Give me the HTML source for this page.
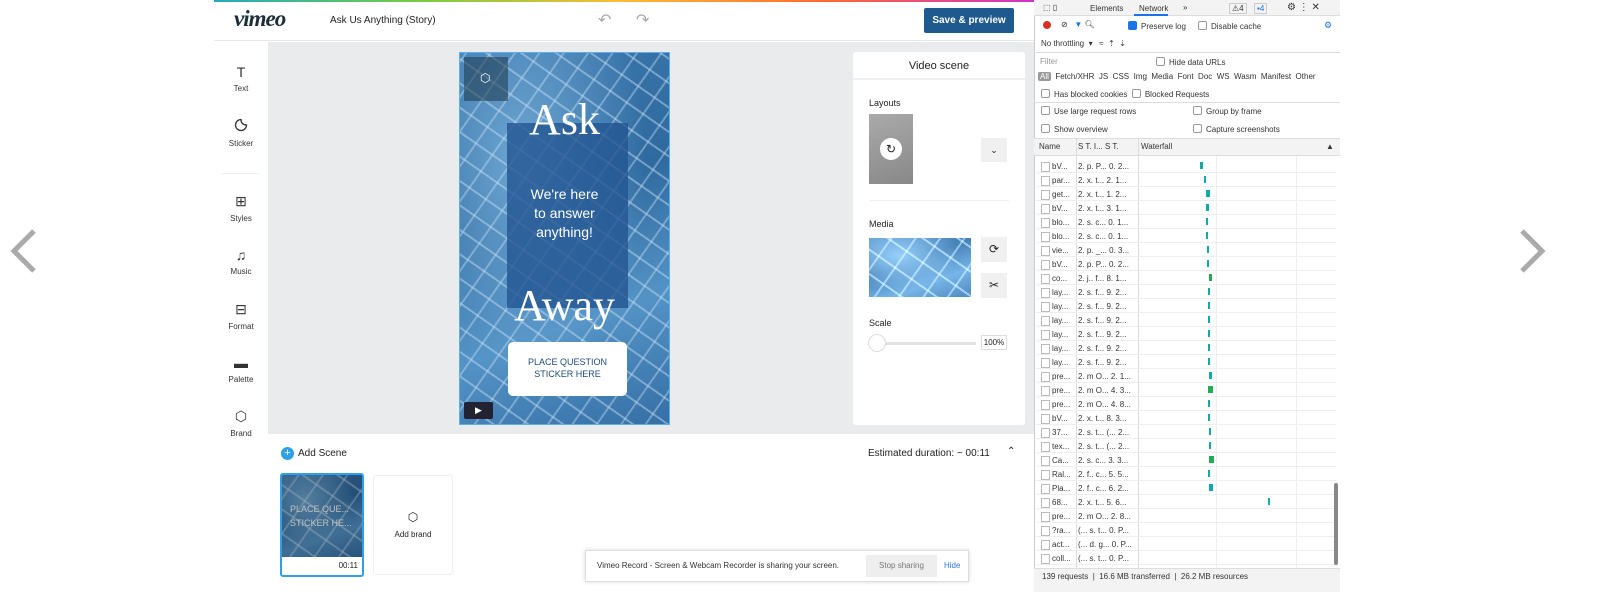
<!DOCTYPE html>
<html><head><meta charset="utf-8"><style>
*{box-sizing:border-box;margin:0;padding:0}
body{width:1600px;height:592px;background:#fff;font-family:"Liberation Sans",sans-serif;position:relative;overflow:hidden;color:#222}
.a{position:absolute}
.side div{position:absolute;left:214px;width:54px;text-align:center;font-size:8px;color:#333}
.side span{display:block;font-size:14px;margin-bottom:4px}
.dt{font-size:8px;color:#333}
.cb{display:inline-block;width:9px;height:9px;border:1px solid #999;border-radius:2px;vertical-align:-1px;margin-right:4px;background:#fff}
.row{position:absolute;left:1036px;width:300px;height:14px;font-size:8px;color:#333;border-bottom:1px solid #eee}
.row span{position:absolute;top:3px}
.row:before{content:"";position:absolute;left:5px;top:3px;width:7px;height:8px;border:1px solid #bbb;background:#fff}
.pool{background:
repeating-linear-gradient(35deg,rgba(255,255,255,0) 0 18px,rgba(200,225,245,.45) 18px 20px),
repeating-linear-gradient(-55deg,rgba(255,255,255,0) 0 18px,rgba(200,225,245,.4) 18px 20px),
radial-gradient(ellipse at 30% 30%,#6fa8d4,transparent 60%),
linear-gradient(160deg,#3d78ad,#2f6a9f 40%,#5493c6 70%,#356fa5)}
</style></head><body>
<div class="a" style="left:214px;top:0;width:820px;height:2px;background:linear-gradient(90deg,#2ab,#7c4,#fb3,#f63,#c3c)"></div>
<div class="a" style="left:214px;top:2px;width:820px;height:39px;background:#fff;border-bottom:1px solid #e6e6e6"></div>
<div class="a" style="left:234px;top:6px;font:bold italic 23px 'Liberation Serif',serif;color:#1a2e3b;letter-spacing:-1px">vimeo</div>
<div class="a" style="left:330px;top:15px;font-size:10px;color:#222">Ask Us Anything (Story)</div>
<div class="a" style="left:598px;top:10px;font-size:16px;color:#aaa">↶</div>
<div class="a" style="left:636px;top:10px;font-size:16px;color:#aaa">↷</div>
<div class="a" style="left:924px;top:8px;width:90px;height:25px;background:#1e5a8e;border-radius:2px;color:#fff;font-size:10px;font-weight:bold;text-align:center;line-height:25px">Save &amp; preview</div>
<div class="a" style="left:214px;top:42px;width:54px;height:550px;background:#fff"></div>
<div class="a" style="left:221px;top:173px;width:40px;height:1px;background:#eee"></div>
<div class="side">
<div style="top:64px"><span>T</span>Text</div>
<div style="top:118px"><span><svg width="14" height="14" viewBox="0 0 14 14"><path d="M7 1.5a5.5 5.5 0 1 0 5.5 5.5C9 7 7 5 7 1.5z" fill="none" stroke="#333" stroke-width="1.3"/></svg></span>Sticker</div>
<div style="top:193px"><span>⊞</span>Styles</div>
<div style="top:247px"><span>♫</span>Music</div>
<div style="top:301px"><span>⊟</span>Format</div>
<div style="top:355px"><span>▬</span>Palette</div>
<div style="top:408px"><span>⬡</span>Brand</div>
</div>
<div class="a" style="left:268px;top:42px;width:766px;height:392px;background:#e9ebec"></div>
<div class="a pool" style="left:459px;top:52px;width:211px;height:373px;border:1px solid #5ab0ef"></div>
<div class="a" style="left:464px;top:57px;width:44px;height:44px;background:rgba(30,55,75,.55)"></div>
<div class="a" style="left:480px;top:71px;color:#fff;font-size:12px">⬡</div>
<div class="a" style="left:507px;top:123px;width:121px;height:185px;background:rgba(35,85,145,.8)"></div>
<div class="a" style="left:459px;top:94px;width:211px;text-align:center;font:44px 'Liberation Serif',serif;color:#fff">Ask</div>
<div class="a" style="left:459px;top:185px;width:211px;text-align:center;font-size:14px;line-height:19px;color:#fff">We're here<br>to answer<br>anything!</div>
<div class="a" style="left:459px;top:280px;width:211px;text-align:center;font:44px 'Liberation Serif',serif;color:#fff">Away</div>
<div class="a" style="left:508px;top:342px;width:119px;height:54px;background:#fff;border-radius:5px;text-align:center;font-size:9px;line-height:12px;color:#1e4b7a;padding-top:14px">PLACE QUESTION<br>STICKER HERE</div>
<div class="a" style="left:464px;top:402px;width:29px;height:17px;background:#223;border-radius:2px;color:#fff;font-size:9px;text-align:center;line-height:17px">▶</div>
<div class="a" style="left:853px;top:52px;width:172px;height:373px;background:#fff;border-radius:3px"></div>
<div class="a" style="left:853px;top:52px;width:172px;height:28px;border-bottom:2px solid #f0f0f0;text-align:center;line-height:28px;font-size:11px">Video scene</div>
<div class="a" style="left:869px;top:98px;font-size:9px">Layouts</div>
<div class="a" style="left:869px;top:114px;width:44px;height:70px;background:linear-gradient(160deg,#aaa,#888)"></div>
<div class="a" style="left:880px;top:138px;width:22px;height:22px;border-radius:50%;background:#fff;text-align:center;line-height:22px;font-size:12px">↻</div>
<div class="a" style="left:981px;top:138px;width:26px;height:24px;background:#f0f0f0;text-align:center;line-height:24px;font-size:9px">⌄</div>
<div class="a" style="left:869px;top:200px;width:140px;height:1px;background:#eee"></div>
<div class="a" style="left:869px;top:219px;font-size:9px">Media</div>
<div class="a pool" style="left:869px;top:238px;width:102px;height:59px;filter:saturate(.8) brightness(1.25)"></div>
<div class="a" style="left:981px;top:237px;width:26px;height:25px;background:#f0f0f0;text-align:center;line-height:25px;font-size:12px">⟳</div>
<div class="a" style="left:981px;top:273px;width:26px;height:25px;background:#f0f0f0;text-align:center;line-height:25px;font-size:12px">✂</div>
<div class="a" style="left:869px;top:318px;font-size:9px">Scale</div>
<div class="a" style="left:876px;top:342px;width:100px;height:3px;background:#e3e3e3"></div>
<div class="a" style="left:868px;top:334px;width:18px;height:18px;border-radius:50%;background:#fff;border:1px solid #ddd"></div>
<div class="a" style="left:981px;top:335px;width:26px;height:15px;border:1px solid #ddd;font-size:8px;text-align:center;line-height:13px">100%</div>
<div class="a" style="left:281px;top:447px;width:13px;height:13px;border-radius:50%;background:#2ea0ea;color:#fff;font-size:11px;text-align:center;line-height:13px">+</div>
<div class="a" style="left:298px;top:448px;font-size:10px">Add Scene</div>
<div class="a" style="left:868px;top:448px;font-size:10px">Estimated duration: ~ 00:11</div>
<div class="a" style="left:1007px;top:446px;font-size:10px">⌃</div>
<div class="a" style="left:280px;top:473px;width:84px;height:104px;border:2px solid #2ea0ea;border-radius:3px;background:#fff;overflow:hidden">
<div class="pool" style="height:82px;filter:brightness(.75);color:#fff;font-size:9px;line-height:14px;padding:27px 0 0 8px">PLACE QUE...<br>STICKER HE...</div>
<div style="text-align:right;padding:4px 4px 0 0;font-size:8px">00:11</div></div>
<div class="a" style="left:373px;top:475px;width:80px;height:100px;border:1px solid #eee;border-radius:3px;text-align:center;font-size:8px;padding-top:34px"><div style="font-size:12px;margin-bottom:6px">⬡</div>Add brand</div>
<div class="a" style="left:585px;top:550px;width:384px;height:32px;background:#fff;border:1px solid #ddd;box-shadow:0 0 4px rgba(0,0,0,.15)"></div>
<div class="a" style="left:597px;top:561px;font-size:8px;color:#333">Vimeo Record - Screen &amp; Webcam Recorder is sharing your screen.</div>
<div class="a" style="left:866px;top:555px;width:71px;height:22px;background:#eee;font-size:8px;color:#777;text-align:center;line-height:22px">Stop sharing</div>
<div class="a" style="left:944px;top:561px;font-size:8px;color:#2a7de1">Hide</div>
<svg class="a" style="left:8px;top:228px" width="30" height="46"><path d="M26 3 L6 23 L26 43" stroke="#aaa" stroke-width="5" fill="none"/></svg>
<svg class="a" style="left:1518px;top:228px" width="30" height="46"><path d="M4 3 L24 23 L4 43" stroke="#aaa" stroke-width="5" fill="none"/></svg>
<div class="a" style="left:1034px;top:0;width:306px;height:592px;background:#fff;border-left:1px solid #ccc"></div>
<div class="a" style="left:1034px;top:0;width:306px;height:16px;background:#f3f3f3;border-bottom:1px solid #ddd"></div>
<div class="a dt" style="left:1043px;top:3px">⬚ ▯</div>
<div class="a dt" style="left:1090px;top:4px">Elements</div>
<div class="a dt" style="left:1139px;top:4px">Network</div>
<div class="a" style="left:1134px;top:14px;width:34px;height:2px;background:#1a73e8"></div>
<div class="a dt" style="left:1183px;top:3px">»</div>
<div class="a dt" style="left:1229px;top:3px;border:1px solid #ccc;padding:0 2px">⚠4</div>
<div class="a dt" style="left:1254px;top:3px;border:1px solid #ccc;padding:0 2px;color:#1a73e8">▪4</div>
<div class="a dt" style="left:1287px;top:2px;font-size:10px">⚙ ⋮ ✕</div>
<div class="a" style="left:1043px;top:21px;width:8px;height:8px;border-radius:50%;background:#d93025"></div>
<div class="a dt" style="left:1061px;top:20px">⊘ &nbsp; <span style="color:#1a73e8">▼</span> 🔍︎</div>
<div class="a dt" style="left:1128px;top:21px"><span class="cb" style="background:#1a73e8;border-color:#1a73e8"></span>Preserve log</div>
<div class="a dt" style="left:1198px;top:21px"><span class="cb"></span>Disable cache</div>
<div class="a" style="left:1324px;top:20px;font-size:9px;color:#1a73e8">⚙</div>
<div class="a dt" style="left:1041px;top:39px">No throttling &nbsp;▾ &nbsp; ≈ &nbsp;⇡ &nbsp;⇣</div>
<div class="a" style="left:1034px;top:52px;width:306px;height:1px;background:#ddd"></div>
<div class="a dt" style="left:1040px;top:57px;width:108px;height:11px;color:#999">Filter</div>
<div class="a dt" style="left:1156px;top:57px"><span class="cb"></span>Hide data URLs</div>
<div class="a dt" style="left:1038px;top:72px"><span style="background:#999;color:#fff;padding:0 2px;border-radius:2px">All</span> &nbsp;Fetch/XHR &nbsp;JS &nbsp;CSS &nbsp;Img &nbsp;Media &nbsp;Font &nbsp;Doc &nbsp;WS &nbsp;Wasm &nbsp;Manifest &nbsp;Other</div>
<div class="a dt" style="left:1041px;top:89px"><span class="cb"></span>Has blocked cookies &nbsp;<span class="cb"></span>Blocked Requests</div>
<div class="a" style="left:1034px;top:102px;width:306px;height:1px;background:#ddd"></div>
<div class="a dt" style="left:1041px;top:106px"><span class="cb"></span>Use large request rows</div>
<div class="a dt" style="left:1193px;top:106px"><span class="cb"></span>Group by frame</div>
<div class="a dt" style="left:1041px;top:124px"><span class="cb"></span>Show overview</div>
<div class="a dt" style="left:1193px;top:124px"><span class="cb"></span>Capture screenshots</div>
<div class="a" style="left:1034px;top:138px;width:306px;height:18px;background:#f3f3f3;border-top:1px solid #ddd;border-bottom:1px solid #ddd"></div>
<div class="a dt" style="left:1039px;top:142px">Name</div>
<div class="a dt" style="left:1078px;top:142px">S T. I... S T.</div>
<div class="a dt" style="left:1141px;top:142px">Waterfall</div>
<div class="a dt" style="left:1326px;top:142px">▲</div>
<div class="a" style="left:1076px;top:138px;width:1px;height:430px;background:#ddd"></div>
<div class="a" style="left:1138px;top:138px;width:1px;height:430px;background:#ddd"></div>
<div class="a" style="left:1216px;top:156px;width:1px;height:412px;background:#eee"></div>
<div class="a" style="left:1296px;top:156px;width:1px;height:412px;background:#eee"></div>
<div class="row" style="top:159px"><span style="left:16px">bV...</span><span style="left:42px">2. p. P... 0. 2...</span><span style="left:164px;width:3px;height:7px;background:#1aa"></span></div>
<div class="row" style="top:173px"><span style="left:16px">par...</span><span style="left:42px">2. x. t... 2. 1...</span><span style="left:168px;width:2px;height:7px;background:#1aa"></span></div>
<div class="row" style="top:187px"><span style="left:16px">get...</span><span style="left:42px">2. x. t... 1. 2...</span><span style="left:170px;width:4px;height:7px;background:#1aa"></span></div>
<div class="row" style="top:201px"><span style="left:16px">bV...</span><span style="left:42px">2. x. t... 3. 1...</span><span style="left:170px;width:3px;height:7px;background:#1aa"></span></div>
<div class="row" style="top:215px"><span style="left:16px">blo...</span><span style="left:42px">2. s. c... 0. 1...</span><span style="left:170px;width:2px;height:7px;background:#1aa"></span></div>
<div class="row" style="top:229px"><span style="left:16px">blo...</span><span style="left:42px">2. s. c... 0. 1...</span><span style="left:170px;width:2px;height:7px;background:#1aa"></span></div>
<div class="row" style="top:243px"><span style="left:16px">vie...</span><span style="left:42px">2. p. _... 0. 3...</span><span style="left:171px;width:2px;height:7px;background:#1aa"></span></div>
<div class="row" style="top:257px"><span style="left:16px">bV...</span><span style="left:42px">2. p. P... 0. 2...</span><span style="left:171px;width:2px;height:7px;background:#1aa"></span></div>
<div class="row" style="top:271px"><span style="left:16px">co...</span><span style="left:42px">2. j.. f... 8. 1...</span><span style="left:173px;width:3px;height:7px;background:#2a5"></span></div>
<div class="row" style="top:285px"><span style="left:16px">lay...</span><span style="left:42px">2. s. f... 9. 2...</span><span style="left:172px;width:2px;height:7px;background:#1aa"></span></div>
<div class="row" style="top:299px"><span style="left:16px">lay...</span><span style="left:42px">2. s. f... 9. 2...</span><span style="left:172px;width:2px;height:7px;background:#1aa"></span></div>
<div class="row" style="top:313px"><span style="left:16px">lay...</span><span style="left:42px">2. s. f... 9. 2...</span><span style="left:172px;width:2px;height:7px;background:#1aa"></span></div>
<div class="row" style="top:327px"><span style="left:16px">lay...</span><span style="left:42px">2. s. f... 9. 2...</span><span style="left:172px;width:2px;height:7px;background:#1aa"></span></div>
<div class="row" style="top:341px"><span style="left:16px">lay...</span><span style="left:42px">2. s. f... 9. 2...</span><span style="left:172px;width:2px;height:7px;background:#1aa"></span></div>
<div class="row" style="top:355px"><span style="left:16px">lay...</span><span style="left:42px">2. s. f... 9. 2...</span><span style="left:172px;width:2px;height:7px;background:#1aa"></span></div>
<div class="row" style="top:369px"><span style="left:16px">pre...</span><span style="left:42px">2. m O... 2. 1...</span><span style="left:173px;width:3px;height:7px;background:#1aa"></span></div>
<div class="row" style="top:383px"><span style="left:16px">pre...</span><span style="left:42px">2. m O... 4. 3...</span><span style="left:172px;width:5px;height:7px;background:#2a5"></span></div>
<div class="row" style="top:397px"><span style="left:16px">pre...</span><span style="left:42px">2. m O... 4. 8...</span><span style="left:172px;width:2px;height:7px;background:#1aa"></span></div>
<div class="row" style="top:411px"><span style="left:16px">bV...</span><span style="left:42px">2. x. t... 8. 3...</span><span style="left:172px;width:2px;height:7px;background:#1aa"></span></div>
<div class="row" style="top:425px"><span style="left:16px">37...</span><span style="left:42px">2. s. t... (... 2...</span><span style="left:173px;width:2px;height:7px;background:#1aa"></span></div>
<div class="row" style="top:439px"><span style="left:16px">tex...</span><span style="left:42px">2. s. t... (... 2...</span><span style="left:173px;width:2px;height:7px;background:#1aa"></span></div>
<div class="row" style="top:453px"><span style="left:16px">Ca...</span><span style="left:42px">2. s. c... 3. 3...</span><span style="left:173px;width:5px;height:7px;background:#2a5"></span></div>
<div class="row" style="top:467px"><span style="left:16px">Ral...</span><span style="left:42px">2. f.. c... 5. 5...</span><span style="left:172px;width:2px;height:7px;background:#1aa"></span></div>
<div class="row" style="top:481px"><span style="left:16px">Pla...</span><span style="left:42px">2. f.. c... 6. 2...</span><span style="left:173px;width:4px;height:7px;background:#1aa"></span></div>
<div class="row" style="top:495px"><span style="left:16px">68...</span><span style="left:42px">2. x. t... 5. 6...</span><span style="left:232px;width:2px;height:7px;background:#1aa"></span></div>
<div class="row" style="top:509px"><span style="left:16px">pre...</span><span style="left:42px">2. m O... 2. 8...</span></div>
<div class="row" style="top:523px"><span style="left:16px">?ra...</span><span style="left:42px">(... s. t... 0. P...</span></div>
<div class="row" style="top:537px"><span style="left:16px">act...</span><span style="left:42px">(... d. g... 0. P...</span></div>
<div class="row" style="top:551px"><span style="left:16px">coll...</span><span style="left:42px">(... s. t... 0. P...</span></div>
<div class="a" style="left:1334px;top:483px;width:4px;height:82px;background:#888;border-radius:2px"></div>
<div class="a" style="left:1034px;top:568px;width:306px;height:24px;background:#f3f3f3;border-top:1px solid #ddd"></div>
<div class="a dt" style="left:1042px;top:572px">139 requests &nbsp;| &nbsp;16.6 MB transferred &nbsp;| &nbsp;26.2 MB resources</div>
</body></html>
